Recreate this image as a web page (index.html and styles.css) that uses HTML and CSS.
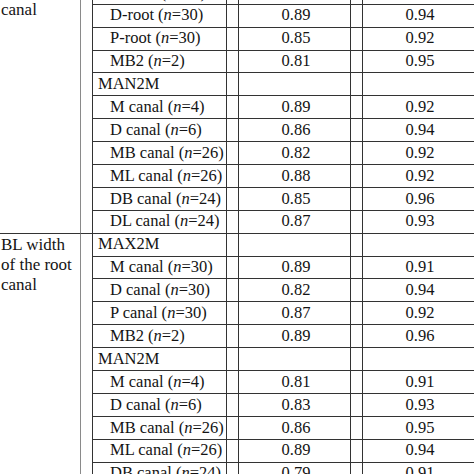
FILE: index.html
```html
<!DOCTYPE html>
<html>
<head>
<meta charset="utf-8">
<link rel="stylesheet" href="styles.css">
</head>
<body>
<div class="table">
  <div class="group">
    <div class="label">MD width<br>of the root<br>canal</div>
    <div class="gap"></div>
    <div class="rows">
      <div class="row"><div class="name head">MAX2M</div><div class="sp"></div><div class="num"></div><div class="sp"></div><div class="num last"></div></div>
      <div class="row"><div class="name">M-root (<i>n</i>=30)</div><div class="sp"></div><div class="num"></div><div class="sp"></div><div class="num last"></div></div>
      <div class="row"><div class="name">D-root (<i>n</i>=30)</div><div class="sp"></div><div class="num">0.89</div><div class="sp"></div><div class="num last">0.94</div></div>
      <div class="row"><div class="name">P-root (<i>n</i>=30)</div><div class="sp"></div><div class="num">0.85</div><div class="sp"></div><div class="num last">0.92</div></div>
      <div class="row"><div class="name">MB2 (<i>n</i>=2)</div><div class="sp"></div><div class="num">0.81</div><div class="sp"></div><div class="num last">0.95</div></div>
      <div class="row"><div class="name head">MAN2M</div><div class="sp"></div><div class="num"></div><div class="sp"></div><div class="num last"></div></div>
      <div class="row"><div class="name">M canal (<i>n</i>=4)</div><div class="sp"></div><div class="num">0.89</div><div class="sp"></div><div class="num last">0.92</div></div>
      <div class="row"><div class="name">D canal (<i>n</i>=6)</div><div class="sp"></div><div class="num">0.86</div><div class="sp"></div><div class="num last">0.94</div></div>
      <div class="row"><div class="name">MB canal (<i>n</i>=26)</div><div class="sp"></div><div class="num">0.82</div><div class="sp"></div><div class="num last">0.92</div></div>
      <div class="row"><div class="name">ML canal (<i>n</i>=26)</div><div class="sp"></div><div class="num">0.88</div><div class="sp"></div><div class="num last">0.92</div></div>
      <div class="row"><div class="name">DB canal (<i>n</i>=24)</div><div class="sp"></div><div class="num">0.85</div><div class="sp"></div><div class="num last">0.96</div></div>
      <div class="row"><div class="name">DL canal (<i>n</i>=24)</div><div class="sp"></div><div class="num">0.87</div><div class="sp"></div><div class="num last">0.93</div></div>
    </div>
  </div>
  <div class="group">
    <div class="label">BL width<br>of the root<br>canal</div>
    <div class="gap"></div>
    <div class="rows">
      <div class="row"><div class="name head">MAX2M</div><div class="sp"></div><div class="num"></div><div class="sp"></div><div class="num last"></div></div>
      <div class="row"><div class="name">M canal (<i>n</i>=30)</div><div class="sp"></div><div class="num">0.89</div><div class="sp"></div><div class="num last">0.91</div></div>
      <div class="row"><div class="name">D canal (<i>n</i>=30)</div><div class="sp"></div><div class="num">0.82</div><div class="sp"></div><div class="num last">0.94</div></div>
      <div class="row"><div class="name">P canal (<i>n</i>=30)</div><div class="sp"></div><div class="num">0.87</div><div class="sp"></div><div class="num last">0.92</div></div>
      <div class="row"><div class="name">MB2 (<i>n</i>=2)</div><div class="sp"></div><div class="num">0.89</div><div class="sp"></div><div class="num last">0.96</div></div>
      <div class="row"><div class="name head">MAN2M</div><div class="sp"></div><div class="num"></div><div class="sp"></div><div class="num last"></div></div>
      <div class="row"><div class="name">M canal (<i>n</i>=4)</div><div class="sp"></div><div class="num">0.81</div><div class="sp"></div><div class="num last">0.91</div></div>
      <div class="row"><div class="name">D canal (<i>n</i>=6)</div><div class="sp"></div><div class="num">0.83</div><div class="sp"></div><div class="num last">0.93</div></div>
      <div class="row"><div class="name">MB canal (<i>n</i>=26)</div><div class="sp"></div><div class="num">0.86</div><div class="sp"></div><div class="num last">0.95</div></div>
      <div class="row"><div class="name">ML canal (<i>n</i>=26)</div><div class="sp"></div><div class="num">0.89</div><div class="sp"></div><div class="num last">0.94</div></div>
      <div class="row"><div class="name">DB canal (<i>n</i>=24)</div><div class="sp"></div><div class="num">0.79</div><div class="sp"></div><div class="num last">0.91</div></div>
    </div>
  </div>
</div>
</body>
</html>
```
FILE: styles.css
```css
html, body {
  margin: 0;
  padding: 0;
  overflow: hidden;
  background: #fff;
}
body {
  width: 474px;
  height: 474px;
  font-family: "Liberation Serif", "Times New Roman", serif;
  font-size: 16.5px;
  color: #141414;
}
.table {
  margin-top: -41px;
  width: 480px;
}
.group {
  display: flex;
  align-items: stretch;
}
.label {
  width: 81px;
  flex: none;
  box-sizing: border-box;
  padding: 1px 0 0 1px;
  line-height: 20px;
  font-size: 17px;
  white-space: nowrap;
  overflow: hidden;
  border-right: 1px solid #8a8a8a;
  border-bottom: 1px solid #333;
}
.gap {
  width: 12px;
  flex: none;
  box-sizing: border-box;
  border-right: 1px solid #333;
  border-bottom: 1px solid #333;
}
.rows {
  display: flex;
  flex-direction: column;
}
.row {
  display: flex;
  height: 22.9px;
  box-sizing: border-box;
  border-bottom: 1px solid #333;
}
.row > div {
  box-sizing: border-box;
  border-right: 1px solid #333;
  display: flex;
  align-items: center;
  line-height: 1;
}
.name {
  width: 134px;
  padding-left: 17px;
  white-space: nowrap;
}
.name.head {
  padding-left: 5px;
}
.sp {
  width: 12px;
}
.num {
  width: 112px;
  justify-content: center;
  padding-left: 3px;
}
.num.last {
  width: 115px;
  padding-left: 0;
}
```
